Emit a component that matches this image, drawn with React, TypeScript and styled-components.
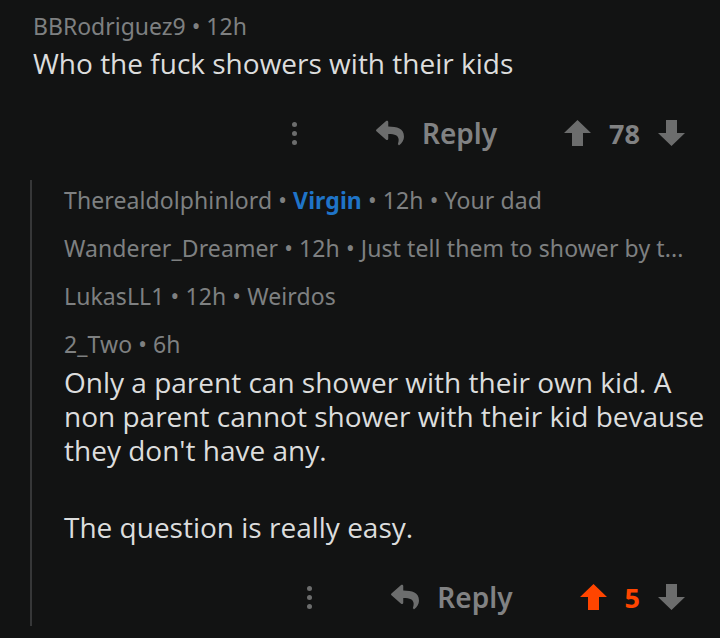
import React from "react";
import styled, { createGlobalStyle } from "styled-components";
import { FaReply } from "react-icons/fa";

const Global = createGlobalStyle`
  html, body { margin: 0; padding: 0; background: #121313; }
  body { width: 720px; height: 638px; overflow: hidden; }
`;

const Page = styled.div`
  width: 720px;
  height: 638px;
  box-sizing: border-box;
  padding: 11px 10px 0 33px;
  background: #121313;
`;

const Meta = styled.div`
  font-family: "Noto Sans", sans-serif;
  font-size: 23px;
  line-height: 30px;
  color: #7e8081;
  white-space: nowrap;
`;

const Body = styled.div`
  font-family: "Open Sans", sans-serif;
  font-size: 28px;
  line-height: 34px;
  color: #dcdddd;
  margin-top: 5px;
`;

const Para = styled.p`
  margin: 0;
  & + & { margin-top: 43px; }
`;

const Actions = styled.div<{ $top: number }>`
  display: flex;
  align-items: center;
  justify-content: flex-end;
  height: 48px;
  padding-right: 25px;
  margin-top: ${(p) => p.$top}px;
`;

const Dots = styled.div`
  display: flex;
  flex-direction: column;
  gap: 4px;
  margin-right: 79px;
  span {
    width: 5px;
    height: 5px;
    border-radius: 50%;
    background: #6c6d6d;
  }
`;

const ReplyBtn = styled.div`
  display: flex;
  align-items: center;
  gap: 18px;
  margin-right: 67px;
  color: #6c6d6d;
  svg { width: 28px; height: 28px; }
`;

const ReplyText = styled.span`
  font-family: "Noto Sans", sans-serif;
  font-weight: 600;
  font-size: 28px;
  color: #818283;
`;

const Vote = styled.div`
  display: flex;
  align-items: center;
  gap: 18px;
`;

const Score = styled.span<{ $up?: boolean }>`
  font-family: "Noto Sans", sans-serif;
  font-weight: 700;
  font-size: 27px;
  color: ${(p) => (p.$up ? "#ff4500" : "#818283")};
`;

const Thread = styled.div`
  margin-top: 23px;
  margin-left: -3px;
  border-left: 2px solid #363738;
  padding: 3px 0 5px 32px;
`;

const Collapsed = styled.div`
  display: flex;
  flex-direction: column;
  gap: 14px;
  margin-bottom: 4px;
`;

const Row = styled(Meta)`
  line-height: 34px;
  letter-spacing: 0.1px;
`;

const Flair = styled.span`
  color: #1f74c8;
  font-weight: 700;
`;

const ChildBody = styled(Body)`
  margin-top: 3px;
`;

const Arrow = ({ down, color }: { down?: boolean; color: string }) => (
  <svg width="27" height="26" viewBox="0 0 27 26" style={{ transform: down ? "rotate(180deg)" : undefined }}>
    <polygon points="13.5,0 27,13 19,13 19,26 8,26 8,13 0,13" fill={color} />
  </svg>
);

const ActionBar = ({ score, up, top }: { score: string; up?: boolean; top: number }) => (
  <Actions $top={top}>
    <Dots>
      <span />
      <span />
      <span />
    </Dots>
    <ReplyBtn>
      <FaReply />
      <ReplyText>Reply</ReplyText>
    </ReplyBtn>
    <Vote>
      <Arrow color={up ? "#ff4500" : "#6c6d6d"} />
      <Score $up={up}>{score}</Score>
      <Arrow down color="#6c6d6d" />
    </Vote>
  </Actions>
);

export default function App() {
  return (
    <Page>
      <Global />
      <Meta>BBRodriguez9 • 12h</Meta>
      <Body>
        <Para>Who the fuck showers with their kids</Para>
      </Body>
      <ActionBar score="78" top={29} />
      <Thread>
        <Collapsed>
          <Row>
            Therealdolphinlord • <Flair>Virgin</Flair> • 12h • Your dad
          </Row>
          <Row>Wanderer_Dreamer • 12h • Just tell them to shower by t...</Row>
          <Row>LukasLL1 • 12h • Weirdos</Row>
          <Row>2_Two • 6h</Row>
        </Collapsed>
        <ChildBody>
          <Para>
            Only a parent can shower with their own kid. A non parent cannot shower with their kid bevause they
            don't have any.
          </Para>
          <Para>The question is really easy.</Para>
        </ChildBody>
        <ActionBar score="5" up top={29} />
      </Thread>
    </Page>
  );
}
